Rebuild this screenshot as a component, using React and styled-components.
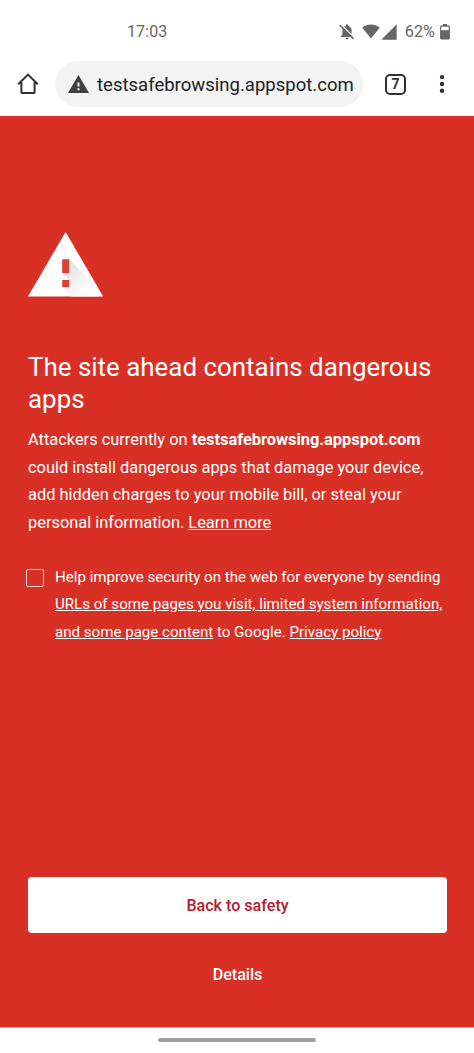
import styled, { createGlobalStyle } from "styled-components";

const App = () => {
  return (
    <Screen>
      <GlobalStyle />
      <StatusBar>
        <Clock>17:03</Clock>
        <StatusIcons>
          <BellOffIcon />
          <WifiIcon />
          <SignalIcon />
          <BatteryText>62%</BatteryText>
          <BatteryIcon />
        </StatusIcons>
      </StatusBar>
      <Toolbar>
        <HomeIcon />
        <AddressBar>
          <WarningIcon />
          <Url>testsafebrowsing.appspot.com</Url>
        </AddressBar>
        <TabCount>7</TabCount>
        <MenuIcon />
      </Toolbar>
      <Warning>
        <DangerIcon />
        <Title>
          The site ahead contains dangerous
          <br />
          apps
        </Title>
        <Message>
          Attackers currently on <b>testsafebrowsing.appspot.com</b>
          <br />
          could install dangerous apps that damage your device,
          <br />
          add hidden charges to your mobile bill, or steal your
          <br />
          personal information. <Link>Learn more</Link>
        </Message>
        <OptIn>
          <Checkbox type="checkbox" />
          <OptInText>
            Help improve security on the web for everyone by sending
            <br />
            <Link>
              URLs of some pages you visit, limited system information,
              <br />
              and some page content
            </Link>{" "}
            to Google. <Link>Privacy policy</Link>
          </OptInText>
        </OptIn>
        <Actions>
          <SafetyButton>Back to safety</SafetyButton>
          <DetailsButton>Details</DetailsButton>
        </Actions>
      </Warning>
      <NavBar>
        <NavHandle />
      </NavBar>
    </Screen>
  );
};

export default App;

const BellOffIcon = () => (
  <svg width="16" height="16" viewBox="0 0 16 16">
    <path
      d="M2 13V11.9L3.4 10.6V6.6C3.4 4.1 4.7 2.4 6.9 1.9V1.4a1.1 1.1 0 0 1 2.2 0v.5c2.2.5 3.5 2.2 3.5 4.7v4L14 11.9V13zM6.4 13.8h3.2a1.6 1.6 0 0 1-3.2 0z"
      fill="#666"
    />
    <path d="M1.6 0 15.8 14.2" stroke="#fff" strokeWidth="1.2" />
    <path d="M.8 1.2 14.6 15" stroke="#666" strokeWidth="1.5" />
  </svg>
);

const WifiIcon = () => (
  <svg width="18" height="15" viewBox="0 0 18 15">
    <path d="M.3 3.7C5.4-.6 12.6-.6 17.7 3.7L9 14.6z" fill="#666" />
  </svg>
);

const SignalIcon = () => (
  <svg width="16" height="16" viewBox="0 0 16 16">
    <path d="M15.7.3v15.4H.3z" fill="#666" />
  </svg>
);

const BatteryIcon = () => (
  <svg width="10" height="16" viewBox="0 0 10 16">
    <path
      d="M3 0h4v1.5h1.7c.7 0 1.2.5 1.2 1.2v11.6c0 .7-.5 1.2-1.2 1.2H1.3c-.7 0-1.2-.5-1.2-1.2V2.7c0-.7.5-1.2 1.2-1.2H3zM1.3 2.8v3.4h7.4V2.8z"
      fill="#666"
      fillRule="evenodd"
    />
  </svg>
);

const HomeIcon = () => (
  <svg width="22" height="22" viewBox="0 0 22 22">
    <path
      d="M1.2 11.2 11 1.6l9.8 9.6M4.4 9v10.2c0 .6.3.9.9.9h11.4c.6 0 .9-.3.9-.9V9"
      fill="none"
      stroke="#303236"
      strokeWidth="2"
    />
  </svg>
);

const WarningIcon = () => (
  <svg width="21" height="18" viewBox="0 0 21 18">
    <path d="M10.5 0 21 18H0z" fill="#3c4043" />
    <path d="M9.5 7.4h2v4h-2zM9.5 13.2h2v2.1h-2z" fill="#f1f3f4" />
  </svg>
);

const MenuIcon = () => (
  <svg width="6" height="20" viewBox="0 0 6 20">
    <circle cx="3" cy="3.1" r="2.2" fill="#303236" />
    <circle cx="3" cy="10" r="2.2" fill="#303236" />
    <circle cx="3" cy="16.8" r="2.2" fill="#303236" />
  </svg>
);

const DangerIcon = () => (
  <svg width="76" height="65" viewBox="0 0 76 65">
    <defs>
      <linearGradient
        id="shade"
        gradientUnits="userSpaceOnUse"
        x1="38"
        y1="34"
        x2="58"
        y2="54"
      >
        <stop offset="0" stopColor="#e2e2e2" />
        <stop offset="1" stopColor="#fbfbfb" />
      </linearGradient>
    </defs>
    <path d="M37.6 0 75.2 64.4H0z" fill="#fff" />
    <path
      d="M41.3 27.2 60 46 70.7 64.4H43.6L34.2 55H41.3V48L34.2 41.2H41.3z"
      fill="url(#shade)"
    />
    <path d="M34.2 27.2h7.1v14h-7.1zM34.2 48h7.1v7h-7.1z" fill="#d94138" />
  </svg>
);

const GlobalStyle = createGlobalStyle`
  body {
    margin: 0;
    font-family: Roboto, "Liberation Sans", sans-serif;
  }

  svg {
    flex-shrink: 0;
  }
`;

const Screen = styled.div`
  display: flex;
  flex-direction: column;
  width: 474px;
  height: 1053px;
  overflow: hidden;
  background-color: #fff;
`;

const StatusBar = styled.div`
  display: flex;
  justify-content: space-between;
  align-items: center;
  height: 52px;
  padding: 11px 24px 0 127px;
  box-sizing: border-box;
  color: #666;
`;

const Clock = styled.div`
  font-size: 16px;
  letter-spacing: 0.1px;
`;

const StatusIcons = styled.div`
  display: flex;
  align-items: center;
  gap: 1px;

  svg:first-child {
    margin-right: 6px;
  }
`;

const BatteryText = styled.div`
  margin: 0 4px 0 7px;
  font-size: 16.3px;
`;

const Toolbar = styled.div`
  display: flex;
  align-items: center;
  height: 64px;
  padding: 0 29px 0 17px;
  box-sizing: border-box;
`;

const AddressBar = styled.div`
  display: flex;
  flex-shrink: 0;
  align-items: center;
  gap: 8px;
  width: 308px;
  height: 46px;
  margin: 0 22px 0 16px;
  padding-left: 13px;
  box-sizing: border-box;
  border-radius: 23px;
  background-color: #f1f3f4;
`;

const Url = styled.div`
  padding-top: 1px;
  font-size: 18.55px;
  white-space: nowrap;
  color: #202124;
`;

const TabCount = styled.div`
  display: flex;
  flex-shrink: 0;
  justify-content: center;
  align-items: center;
  width: 21px;
  height: 21px;
  margin-right: 33px;
  box-sizing: border-box;
  border: 2px solid #303236;
  border-radius: 5px;
  font-size: 14px;
  font-weight: 700;
  color: #303236;
`;

const Warning = styled.main`
  display: flex;
  flex-direction: column;
  height: 912px;
  padding: 116px 27px 0 28px;
  box-sizing: border-box;
  border-bottom: 1px solid #f0aaa5;
  background-color: #d93025;
  color: #fff;
`;

const Title = styled.h1`
  margin: 54px 0 0;
  font-size: 25.92px;
  font-weight: 400;
  line-height: 32px;
  white-space: nowrap;
`;

const Message = styled.p`
  margin: 11px 0 0;
  font-size: 16.4px;
  line-height: 27.7px;
  white-space: nowrap;
`;

const Link = styled.a`
  text-decoration: underline;
  cursor: pointer;
`;

const OptIn = styled.label`
  display: flex;
  margin-top: 26.8px;
  margin-left: -2px;
`;

const Checkbox = styled.input`
  appearance: none;
  width: 18px;
  height: 18px;
  margin: 5.5px 11px 0 0;
  border: 1px solid #f8d0cc;
  border-radius: 2px;
`;

const OptInText = styled.div`
  font-size: 15.1px;
  line-height: 27.6px;
  white-space: nowrap;
`;

const Actions = styled.div`
  display: flex;
  flex-direction: column;
  margin-top: auto;
  padding-bottom: 25px;
`;

const SafetyButton = styled.button`
  height: 56px;
  border: none;
  border-radius: 4px;
  background-color: #fff;
  font-family: inherit;
  font-size: 16.1px;
  font-weight: 500;
  color: #b3202c;
  cursor: pointer;
`;

const DetailsButton = styled(SafetyButton)`
  margin-top: 13px;
  background-color: transparent;
  color: #fff;
`;

const NavBar = styled.div`
  display: flex;
  flex: 1;
  justify-content: center;
  padding-top: 10px;
`;

const NavHandle = styled.div`
  width: 158px;
  height: 4px;
  border-radius: 2px;
  background-color: #a0a0a0;
`;
